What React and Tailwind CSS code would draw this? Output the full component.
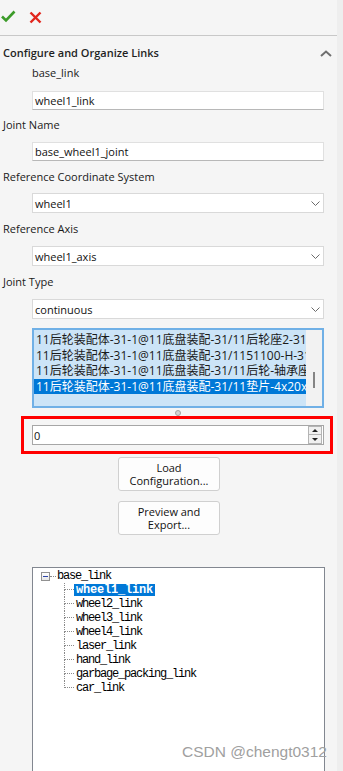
import React from "react";

const ChevronDown = () => (
  <svg width="9" height="5" viewBox="0 0 9 5" className="shrink-0">
    <polyline points="0.5,0.5 4.5,4.5 8.5,0.5" fill="none" stroke="#6b6b6b" strokeWidth="1" />
  </svg>
);

function TextBox({ value }) {
  return (
    <div className="ml-[32px] w-[292px] h-[19px] bg-white border border-[#e0e0e0] border-b-[#b8b8b8] flex items-center pl-[2px] text-[11px] text-[#111111] leading-[17px]">
      {value}
    </div>
  );
}

function Select({ value }) {
  return (
    <div className="ml-[32px] w-[292px] h-[20px] bg-white border border-[#d9d9d9] flex items-center pl-[2px] pr-[3px] text-[11px] text-[#111111] leading-[17px]">
      <span className="flex-1">{value}</span>
      <ChevronDown />
    </div>
  );
}

function Label({ children, indent }) {
  return (
    <div className={"h-[16px] leading-[16px] text-[11px] text-[#1a1a1a] " + (indent ? "pl-[32px]" : "pl-[3px]")}>
      {children}
    </div>
  );
}

const rows = [
  "11后轮装配体-31-1@11底盘装配-31/11后轮座2-31-1",
  "11后轮装配体-31-1@11底盘装配-31/1151100-H-31-1",
  "11后轮装配体-31-1@11底盘装配-31/11后轮-轴承座-1",
  "11后轮装配体-31-1@11底盘装配-31/11垫片-4x20x2-1",
];

const children = [
  "wheel1_link",
  "wheel2_link",
  "wheel3_link",
  "wheel4_link",
  "laser_link",
  "hand_link",
  "garbage_packing_link",
  "car_link",
];

export default function App() {
  return (
    <div className="w-[343px] h-[771px] overflow-hidden bg-[#f5f5f5] flex relative font-['Open_Sans','Noto_Sans_CJK_SC',sans-serif]">
      <div className="flex-1 min-w-0 flex flex-col">
        {/* toolbar */}
        <div className="h-[36px] shrink-0 border-b border-[#c8c8c8] flex items-start pt-[10px] pl-[1px]">
          <svg width="16" height="14" viewBox="0 0 16 14">
            <polyline points="1,6.5 5,10.5 13.5,1.5" fill="none" stroke="#3c9b29" strokeWidth="2.6" />
          </svg>
          <svg width="13" height="13" viewBox="0 0 13 13" className="ml-[12px] mt-[1px]">
            <line x1="1.5" y1="1.5" x2="11.5" y2="11.5" stroke="#e1261c" strokeWidth="2.4" />
            <line x1="11.5" y1="1.5" x2="1.5" y2="11.5" stroke="#e1261c" strokeWidth="2.4" />
          </svg>
        </div>

        {/* section header */}
        <div className="mt-[9px] h-[16px] flex items-center pl-[3px] pr-[5px]">
          <span className="flex-1 text-[11px] font-semibold text-[#1f1f1f] leading-[16px]">
            Configure and Organize Links
          </span>
          <svg width="12" height="7" viewBox="0 0 12 7">
            <polyline points="1,6 6,1.5 11,6" fill="none" stroke="#6f6f6f" strokeWidth="2" />
          </svg>
        </div>

        <div className="mt-[4px]">
          <Label indent>base_link</Label>
        </div>
        <div className="mt-[10px]">
          <TextBox value="wheel1_link" />
        </div>
        <div className="mt-[7px]">
          <Label>Joint Name</Label>
        </div>
        <div className="mt-[9px]">
          <TextBox value="base_wheel1_joint" />
        </div>
        <div className="mt-[8px]">
          <Label>Reference Coordinate System</Label>
        </div>
        <div className="mt-[8px]">
          <Select value="wheel1" />
        </div>
        <div className="mt-[8px]">
          <Label>Reference Axis</Label>
        </div>
        <div className="mt-[9px]">
          <Select value="wheel1_axis" />
        </div>
        <div className="mt-[8px]">
          <Label>Joint Type</Label>
        </div>
        <div className="mt-[9px]">
          <Select value="continuous" />
        </div>

        {/* list box */}
        <div className="mt-[9px] ml-[32px] w-[292px] h-[80px] border-2 border-[#70b0e6] bg-[#cce4f7] flex">
          <div className="flex-1 min-w-0 overflow-hidden pt-[2px]">
            {rows.map((r, i) => (
              <div
                key={i}
                className={
                  "h-[15.5px] leading-[15.5px] text-[12px] whitespace-nowrap pl-[2px] " +
                  (i === 3 ? "bg-[#0078d7] text-white" : "text-[#1a1a1a]")
                }
              >
                {r}
              </div>
            ))}
          </div>
          <div className="w-[16px] shrink-0 bg-[#f2f2f2] flex flex-col items-center pt-[42px]">
            <div className="w-[2px] h-[16px] bg-[#858585]" />
          </div>
        </div>

        {/* splitter dot */}
        <div className="mt-[2px] ml-[175px] w-[6px] h-[6px] rounded-full bg-[#d4d4d4] border border-[#a3a3a3]" />

        {/* red highlighted box */}
        <div className="ml-[21px] w-[312px] h-[38px] border-[3px] border-[#ff0000] pt-[6px] pl-[8px]">
          <div className="w-[292px] h-[20px] bg-white border border-[#a6a6a6] flex items-center">
            <span className="flex-1 pl-[1px] text-[11px] text-[#111111] leading-[17px]">0</span>
            <div className="w-[14px] h-[18px] flex flex-col mr-[1px]">
              <div className="h-[9px] border border-[#b4b4b4] bg-[#f0f0f0] flex items-center justify-center">
                <svg width="6" height="3" viewBox="0 0 6 3">
                  <polygon points="0,3 3,0 6,3" fill="#202020" />
                </svg>
              </div>
              <div className="h-[9px] border border-t-0 border-[#b4b4b4] bg-[#f0f0f0] flex items-center justify-center">
                <svg width="6" height="3" viewBox="0 0 6 3">
                  <polygon points="0,0 6,0 3,3" fill="#202020" />
                </svg>
              </div>
            </div>
          </div>
        </div>

        {/* buttons */}
        <div className="mt-[3px] ml-[118px] w-[102px] h-[34px] rounded-[3px] border border-[#d0d0d0] bg-[#fdfdfd] flex flex-col items-center justify-center text-[11px] leading-[13.5px] text-[#111111] text-center">
          <span>Load</span>
          <span>Configuration...</span>
        </div>
        <div className="mt-[10px] ml-[118px] w-[102px] h-[34px] rounded-[3px] border border-[#d0d0d0] bg-[#fdfdfd] flex flex-col items-center justify-center text-[11px] leading-[13.5px] text-[#111111] text-center">
          <span>Preview and</span>
          <span>Export...</span>
        </div>

        {/* tree */}
        <div className="mt-[32px] ml-[32px] w-[293px] flex-1 bg-white border border-b-0 border-[#828790] pt-[1px] pl-[8px] font-['Liberation_Mono',monospace] text-[12px] tracking-[-1.2px] text-black">
          <div className="h-[14px] flex items-center">
            <div className="w-[9px] h-[9px] border border-[#919191] bg-gradient-to-b from-white to-[#e6e6e6] flex items-center justify-center">
              <div className="w-[5px] h-[1px] bg-[#2e45a8]" />
            </div>
            <div className="w-[6px] border-t border-dotted border-[#8a8a8a]" />
            <span className="ml-[1px] leading-[14px]">base_link</span>
          </div>
          <div className="ml-[23px]">
            {children.map((c, i) => (
              <div key={c} className="h-[14px] flex">
                <div className="w-[10px] flex flex-col">
                  <div className="h-[7px] border-l border-b border-dotted border-[#8a8a8a]" />
                  <div className={"h-[7px] " + (i < children.length - 1 ? "border-l border-dotted border-[#8a8a8a]" : "")} />
                </div>
                {i === 0 ? (
                  <span className="self-center h-[12px] leading-[12px] px-[2px] bg-[#0078d7] text-white font-bold tracking-[-0.2px]">
                    {c}
                  </span>
                ) : (
                  <span className="ml-[2px] leading-[14px]">{c}</span>
                )}
              </div>
            ))}
          </div>
        </div>
      </div>
      <div className="w-[6px] shrink-0 bg-[#eeeeee]" />

      {/* watermark */}
      <div className="absolute left-[182px] top-[742px] text-[15.5px] leading-[20px] text-[#a0a0a0] font-['Liberation_Sans',sans-serif]">
        CSDN @chengt0312
      </div>
    </div>
  );
}
